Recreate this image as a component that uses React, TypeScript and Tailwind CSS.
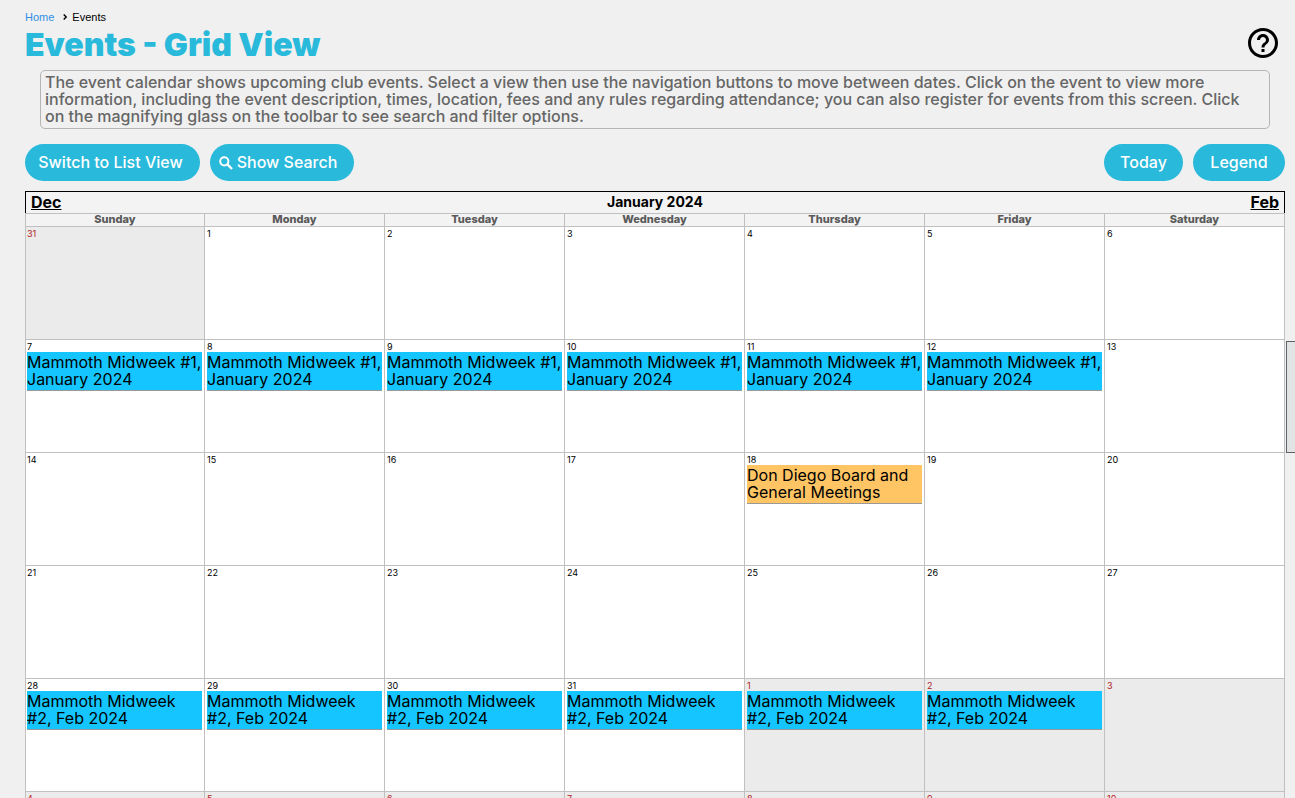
import { MdHelpOutline } from 'react-icons/md';

interface CalendarDay {
    day: number;
    outside?: boolean;
    event?: string;
    tone?: 'trip' | 'meeting';
}

const WEEKDAYS = ['Sunday', 'Monday', 'Tuesday', 'Wednesday', 'Thursday', 'Friday', 'Saturday'];

const FIRST_TRIP = 'Mammoth Midweek #1, January 2024';
const SECOND_TRIP = 'Mammoth Midweek #2, Feb 2024';

const getEvent = (offset: number): Pick<CalendarDay, 'event' | 'tone'> => {
    if (offset >= 7 && offset <= 12) return { event: FIRST_TRIP, tone: 'trip' };
    if (offset === 18) return { event: 'Don Diego Board and General Meetings', tone: 'meeting' };
    if (offset >= 28 && offset <= 33) return { event: SECOND_TRIP, tone: 'trip' };
    return {};
};

// January 2024 starts on a Monday, so offset 0 is the last day of December
const buildWeeks = (): CalendarDay[][] =>
    Array.from({ length: 6 }, (_, week) =>
        Array.from({ length: 7 }, (_, weekday) => {
            const offset = week * 7 + weekday;
            const outside = offset < 1 || offset > 31;
            const day = offset < 1 ? 31 : offset > 31 ? offset - 31 : offset;
            return { day, outside, ...getEvent(offset) };
        }),
    );

const PillButton: React.FC<{ className: string; children: React.ReactNode }> = ({ className, children }) => (
    <button
        type="button"
        className={`flex h-[37px] cursor-pointer items-center justify-center rounded-full bg-[#29b9da] pb-[2px] text-base font-medium text-white ${className}`}
    >
        {children}
    </button>
);

const DayCell: React.FC<{ item: CalendarDay }> = ({ item }) => (
    <td className={`h-[113px] border border-[#c0c0c0] px-[2px] align-top first:pl-px ${item.outside ? 'bg-[#ebebeb]' : 'bg-white'}`}>
        <div className={`pt-px text-[9px] leading-[11px] ${item.outside ? 'text-[#b22222]' : 'text-black'}`}>{item.day}</div>
        {item.event && (
            <a
                href="#event"
                className={`block border-b border-[#999999] pt-[2px] pb-[2px] text-base leading-[17px] text-black ${
                    item.tone === 'meeting' ? 'bg-[#ffc565]' : 'bg-[#14c5ff]'
                }`}
            >
                {item.event}
            </a>
        )}
    </td>
);

const App: React.FC = () => {
    const weeks = buildWeeks();

    return (
        <div className="min-h-screen bg-[#f0f0f0] pr-[10px] pl-[25px] font-['Inter',sans-serif]">
            <nav aria-label="Breadcrumb" className="flex items-center pt-[10px] font-['Liberation_Sans',Arial,sans-serif] text-[11px] leading-[14px]">
                <a href="#home" className="text-[#2f8fe5]">
                    Home
                </a>
                <svg viewBox="0 0 4 6" className="mr-[5px] ml-[9px] h-[6px] w-1" fill="none" stroke="black" strokeWidth="1.4">
                    <path d="M0.7 0.5 3.2 3 0.7 5.5" />
                </svg>
                <span className="text-black">Events</span>
            </nav>

            <header className="flex h-10 items-center justify-between pr-1">
                <h1 className="pt-[2px] text-[32px] leading-[40px] font-black text-[#29b9da]">Events - Grid View</h1>
                <button type="button" aria-label="Help" className="cursor-pointer pb-[2px] text-black">
                    <MdHelpOutline className="size-9" />
                </button>
            </header>

            <p className="mx-[15px] mt-[6px] rounded-[5px] border border-[#b5b5b5] py-[3px] pr-3 pl-1 text-base leading-[17px] font-medium text-[#666666]">
                The event calendar shows upcoming club events. Select a view then use the navigation buttons to move between dates. Click on the event to view more
                information, including the event description, times, location, fees and any rules regarding attendance; you can also register for events from this
                screen. Click on the magnifying glass on the toolbar to see search and filter options.
            </p>

            <div className="mt-[15px] flex gap-[10px]">
                <PillButton className="w-[175px] pr-1">Switch to List View</PillButton>
                <PillButton className="w-[144px] pr-2">
                    <svg viewBox="0 0 14 14" className="mt-[2px] size-[14px]" fill="none" stroke="currentColor" strokeWidth="2">
                        <circle cx="5.3" cy="5.3" r="4.1" />
                        <path d="M8.4 8.4 13 13" strokeWidth="2.4" />
                    </svg>
                    <span className="ml-1">Show Search</span>
                </PillButton>
                <PillButton className="ml-auto w-[79px]">Today</PillButton>
                <PillButton className="w-[92px]">Legend</PillButton>
            </div>

            <div className="mt-[10px] flex h-[22px] items-center justify-between border-x border-t border-black bg-[#f3f3f3] px-[5px] pb-[2px] text-black">
                <a href="#dec" className="w-16 text-base font-bold underline">
                    Dec
                </a>
                <h2 className="text-[14px] font-bold">January 2024</h2>
                <a href="#feb" className="w-16 text-right text-base font-bold underline">
                    Feb
                </a>
            </div>

            <table className="w-full table-fixed border-collapse">
                <colgroup>
                    <col className="w-[179px]" />
                    <col span={6} />
                </colgroup>
                <thead>
                    <tr>
                        {WEEKDAYS.map((name) => (
                            <th
                                key={name}
                                scope="col"
                                className="border border-[#c0c0c0] bg-[#f3f3f3] p-0 pb-[2px] text-[11px] leading-[10px] font-extrabold text-[#5a5a5a]"
                            >
                                {name}
                            </th>
                        ))}
                    </tr>
                </thead>
                <tbody>
                    {weeks.map((week, index) => (
                        <tr key={index}>
                            {week.map((item, weekday) => (
                                <DayCell key={weekday} item={item} />
                            ))}
                        </tr>
                    ))}
                </tbody>
            </table>

            <aside className="fixed top-[341px] right-0 h-28 w-[9px] border border-r-0 border-[#5f6368] bg-[#e2e3e5]" />
        </div>
    );
};

export default App;
